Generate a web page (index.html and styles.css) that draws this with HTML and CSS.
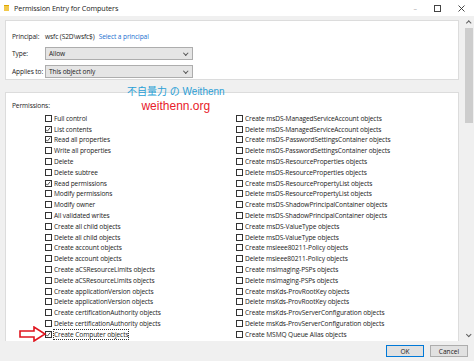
FILE: index.html
```html
<!DOCTYPE html>
<html lang="en">
<head>
  <meta charset="UTF-8" />
  <title>Permission Entry for Computers</title>
  <link rel="stylesheet" href="styles.css">
</head>
<body>

  <div class="window">
    <div class="titlebar">
      <span class="folder"></span>
      <span class="title">Permission Entry for Computers</span>
      <span class="controls">
        <span class="min">&#8211;</span>
        <span class="max"></span>
        <svg class="close" width="7" height="7" viewBox="0 0 7 7"><path d="M0.5 0.5 L6.5 6.5 M6.5 0.5 L0.5 6.5" stroke="#333" stroke-width="0.9"/></svg>
      </span>
    </div>

    <div class="main">
      <div class="content">
        <div class="panel top-panel">
          <div class="field">
            <span class="label">Principal:</span>
            <span class="value">wsfc (S2D\wsfc$)</span>
            <a class="link">Select a principal</a>
          </div>
          <div class="field">
            <span class="label">Type:</span>
            <div class="select">Allow<span class="chev"></span></div>
          </div>
          <div class="field">
            <span class="label">Applies to:</span>
            <div class="select">This object only<span class="chev"></span></div>
          </div>
        </div>

        <div class="panel perm-panel">
          <div class="perm-label">Permissions:</div>
          <div class="perm-grid" id="perm-grid"></div>
        </div>
      </div>

      <div class="scrollbar">
        <span class="sb-up"></span>
        <span class="sb-thumb"></span>
        <span class="sb-space"></span>
        <span class="sb-down"></span>
      </div>
    </div>

    <div class="footer">
      <button class="btn btn-ok">OK</button>
      <button class="btn">Cancel</button>
    </div>
  </div>

  <div class="watermark">
    <div class="wm-blue">不自量力 の Weithenn</div>
    <div class="wm-red">weithenn.org</div>
  </div>

  <svg class="red-arrow" width="28" height="16" viewBox="0 0 28 16">
    <path d="M1 5 L15 5 L15 1 L26 8 L15 15 L15 11 L1 11 Z" fill="#fff" stroke="#e0141e" stroke-width="1.6" stroke-linejoin="miter"/>
  </svg>

  <script>
    const left = [
      ['Full control', 0], ['List contents', 1], ['Read all properties', 1],
      ['Write all properties', 0], ['Delete', 0], ['Delete subtree', 0],
      ['Read permissions', 1], ['Modify permissions', 0], ['Modify owner', 0],
      ['All validated writes', 0], ['Create all child objects', 0], ['Delete all child objects', 0],
      ['Create account objects', 0], ['Delete account objects', 0],
      ['Create aCSResourceLimits objects', 0], ['Delete aCSResourceLimits objects', 0],
      ['Create applicationVersion objects', 0], ['Delete applicationVersion objects', 0],
      ['Create certificationAuthority objects', 0], ['Delete certificationAuthority objects', 0],
      ['Create Computer objects', 2]
    ];
    const right = [
      'Create msDS-ManagedServiceAccount objects', 'Delete msDS-ManagedServiceAccount objects',
      'Create msDS-PasswordSettingsContainer objects', 'Delete msDS-PasswordSettingsContainer objects',
      'Create msDS-ResourceProperties objects', 'Delete msDS-ResourceProperties objects',
      'Create msDS-ResourcePropertyList objects', 'Delete msDS-ResourcePropertyList objects',
      'Create msDS-ShadowPrincipalContainer objects', 'Delete msDS-ShadowPrincipalContainer objects',
      'Create msDS-ValueType objects', 'Delete msDS-ValueType objects',
      'Create msieee80211-Policy objects', 'Delete msieee80211-Policy objects',
      'Create msImaging-PSPs objects', 'Delete msImaging-PSPs objects',
      'Create msKds-ProvRootKey objects', 'Delete msKds-ProvRootKey objects',
      'Create msKds-ProvServerConfiguration objects', 'Delete msKds-ProvServerConfiguration objects',
      'Create MSMQ Queue Alias objects'
    ];

    const check = '<svg width="7" height="7" viewBox="0 0 7 7"><path d="M1 3.6 L2.8 5.4 L6 1.4" fill="none" stroke="#222" stroke-width="0.9"/></svg>';

    function row(text, state) {
      const cls = state === 2 ? 'perm focus' : 'perm';
      return `<div class="${cls}"><span class="box">${state ? check : ''}</span><span class="text">${text}</span></div>`;
    }

    const grid = document.getElementById('perm-grid');
    let html = '';
    for (let i = 0; i < left.length; i++) {
      html += row(left[i][0], left[i][1]);
      html += row(right[i], 0);
    }
    grid.innerHTML = html;
  </script>

</body>
</html>
```

FILE: styles.css
```css
body {
  margin: 0;
  font-family: 'Open Sans', 'Liberation Sans', sans-serif;
  font-size: 6.6px;
  letter-spacing: -0.1px;
  color: #1a1a1a;
  background-color: #f0f0f0;
  width: 474px;
  height: 361px;
  overflow: hidden;
  position: relative;
}

.window {
  display: flex;
  flex-direction: column;
  height: 361px;
}

.titlebar {
  height: 16px;
  background-color: #fff;
  display: flex;
  align-items: center;
  padding-left: 4px;
}

.folder {
  width: 5px;
  height: 5px;
  background-color: #f2c94c;
  border-top: 1px solid #e0a800;
  margin-right: 5px;
}

.title {
  font-size: 7.2px;
  color: #222;
}

.controls {
  margin-left: auto;
  display: flex;
  align-items: center;
  gap: 17px;
  padding-right: 9px;
}

.min {
  color: #aaa;
  font-size: 7px;
}

.max {
  width: 5px;
  height: 5px;
  border: 1px solid #444;
}

.main {
  display: flex;
  height: 325px;
}

.content {
  flex: 1;
  padding: 4px 5px 0 5px;
  overflow: hidden;
}

.panel {
  background-color: #fff;
  border: 1px solid #dcdcdc;
}

.top-panel {
  padding: 7px 0 0 6px;
  box-sizing: border-box;
  height: 60px;
}

.field {
  display: flex;
  align-items: center;
  height: 18px;
}

.field:first-child {
  height: 16px;
}

.label {
  width: 33px;
  white-space: nowrap;
}

.value {
  margin-right: 4px;
}

.link {
  color: #1a6fd0;
}

.select {
  width: 143px;
  height: 11px;
  background-color: #e5e5e5;
  border: 1px solid #adadad;
  display: flex;
  align-items: center;
  padding-left: 3px;
  box-sizing: content-box;
  position: relative;
}

.chev {
  position: absolute;
  right: 5px;
  top: 3px;
  width: 2.5px;
  height: 2.5px;
  border-right: 1px solid #555;
  border-bottom: 1px solid #555;
  transform: rotate(45deg);
}

.perm-panel {
  margin-top: 12px;
  height: 260px;
  padding: 8px 0 0 6px;
}

.perm-label {
  line-height: 10px;
  margin-bottom: 2px;
}

.perm-grid {
  display: grid;
  grid-template-columns: 191px 1fr;
  padding-left: 33px;
}

.perm {
  display: flex;
  align-items: center;
  height: 10.8px;
  white-space: nowrap;
}

.box {
  width: 7px;
  height: 7px;
  border: 1px solid #333;
  box-sizing: border-box;
  background-color: #fff;
  margin-right: 2px;
  display: flex;
  flex-shrink: 0;
}

.box svg {
  margin: -1px 0 0 -1px;
}

.focus .text {
  outline: 1px dotted #333;
}

.scrollbar {
  width: 10px;
  display: flex;
  flex-direction: column;
  align-items: center;
  background-color: #f0f0f0;
}

.sb-up,
.sb-down {
  width: 2.5px;
  height: 2.5px;
  border-left: 1px solid #606060;
  border-top: 1px solid #606060;
  transform: rotate(45deg);
  margin: 5px 0 3px;
}

.sb-down {
  transform: rotate(225deg);
  margin: 3px 0 5px;
}

.sb-thumb {
  width: 8px;
  height: 95px;
  background-color: #cdcdcd;
}

.sb-space {
  flex: 1;
}

.footer {
  flex: 1;
  display: flex;
  justify-content: flex-end;
  align-items: center;
  gap: 6px;
  padding-right: 6px;
}

.btn {
  font-family: inherit;
  font-size: 6.6px;
  width: 38px;
  height: 12px;
  padding: 0;
  background-color: #e1e1e1;
  border: 1px solid #adadad;
  color: #1a1a1a;
}

.btn-ok {
  border: 1px solid #0078d7;
}

.watermark {
  position: absolute;
  left: 127px;
  top: 85px;
  text-align: center;
  line-height: 14px;
  letter-spacing: 0;
}

.wm-blue {
  color: #2a9fd6;
  font-size: 10px;
  font-family: 'Liberation Sans', 'Noto Sans CJK TC', sans-serif;
}

.wm-red {
  color: #e8202a;
  font-size: 12px;
  font-family: 'Liberation Sans', sans-serif;
}

.red-arrow {
  position: absolute;
  left: 19px;
  top: 326px;
}
```
